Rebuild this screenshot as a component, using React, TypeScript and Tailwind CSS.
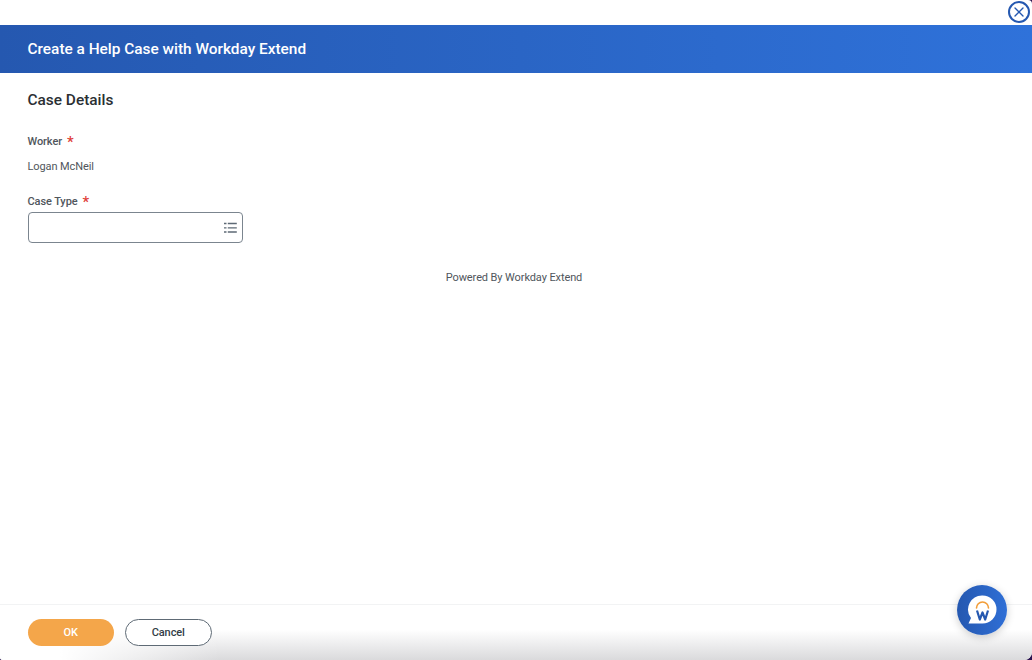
import { X } from "lucide-react"

function Required() {
  return <span className="ml-[5px] text-[15px] leading-none text-[#e0403a]">*</span>
}

function ListIcon() {
  return (
    <svg width="13" height="12" viewBox="0 0 13 12" fill="none" stroke="#5e6a75" strokeWidth="1.3">
      <path d="M0 1.5h2.5M3.8 1.5h9M0 5.8h2.5M3.8 5.8h9M0 10h2.5M3.8 10h9" />
    </svg>
  )
}

function ChatLauncher() {
  return (
    <button className="absolute bottom-[25px] right-[25px] flex h-[50px] w-[50px] items-center justify-center rounded-full bg-gradient-to-r from-[#2558b0] to-[#2f6fd6] shadow-[0_2px_8px_rgba(0,0,0,0.2)]">
      <svg width="30" height="30" viewBox="0 0 30 30" fill="none">
        <path d="M15.5 .5a14 14 0 1 1 0 28H1.5l2.5-5.5A14 14 0 0 1 15.5 .5Z" fill="#fff" />
        <path d="M9.5 13a6 6 0 0 1 12 0" stroke="#f29d38" strokeWidth="1.6" strokeLinecap="round" />
        <path d="M10 15.5l2.8 9 2.7-7 2.7 7 2.8-9" stroke="#2558b0" strokeWidth="2.2" strokeLinejoin="round" />
      </svg>
    </button>
  )
}

export default function App() {
  return (
    <div className="h-[660px] w-[1032px] overflow-hidden bg-[#2b1450]">
      <div className="relative flex h-full flex-col overflow-hidden rounded-tr-[4px] rounded-br-[8px] rounded-bl-[3px] bg-white font-['Roboto',sans-serif] text-[#333d47]">
        <div className="h-[25px] shrink-0" />

        <header className="flex h-[48px] shrink-0 items-center bg-gradient-to-r from-[#2558b0] to-[#2f72da] px-[27.5px] pt-[1px]">
          <h1 className="text-[15.4px] font-medium text-white">Create a Help Case with Workday Extend</h1>
        </header>

        <main className="flex flex-1 flex-col px-[27.5px] pt-[18px]">
          <h2 className="text-[15.4px] leading-[19px] font-medium text-[#2b2f33]">Case Details</h2>

          <div className="mt-[23px] flex h-[18px] items-center text-[11px] font-medium tracking-[-0.1px] text-[#50565c]">
            Worker
            <Required />
          </div>
          <p className="mt-[8px] text-[11px] leading-[16px] tracking-[-0.1px] text-[#50565c]">Logan McNeil</p>

          <div className="mt-[18px] flex h-[18px] items-center text-[11px] font-medium tracking-[-0.1px] text-[#50565c]">
            Case Type
            <Required />
          </div>
          <div className="mt-[1px] flex h-[31px] w-[215px] items-center justify-end rounded-[4px] border border-[#7b858f] pr-[5px]">
            <ListIcon />
          </div>

          <p className="mt-[27px] w-[973px] text-center text-[11px] leading-[16px] tracking-[-0.1px] text-[#50565c]">Powered By Workday Extend</p>
        </main>

        <footer className="flex h-[56px] shrink-0 items-start gap-[11px] border-t border-[#f2f3f4] bg-[linear-gradient(90deg,#fff_60px,transparent_220px),linear-gradient(180deg,#fff_45%,#dadadc)] px-[27.5px] pt-[14px]">
          <button className="h-[27px] w-[86.5px] rounded-full bg-[#f4a64a] pt-[1px] text-[11px] font-medium tracking-[-0.1px] text-white">OK</button>
          <button className="h-[27px] w-[86.5px] rounded-full border border-[#5e6a75] bg-white pt-[1px] text-[11px] font-medium tracking-[-0.1px] text-[#333d47]">Cancel</button>
        </footer>

        <button className="absolute right-[2px] top-[1px] flex h-[22px] w-[22px] items-center justify-center rounded-full border-2 border-[#2558b0] bg-white text-[#2558b0]">
          <X size={16} strokeWidth={2} />
        </button>

        <ChatLauncher />
      </div>
    </div>
  )
}
